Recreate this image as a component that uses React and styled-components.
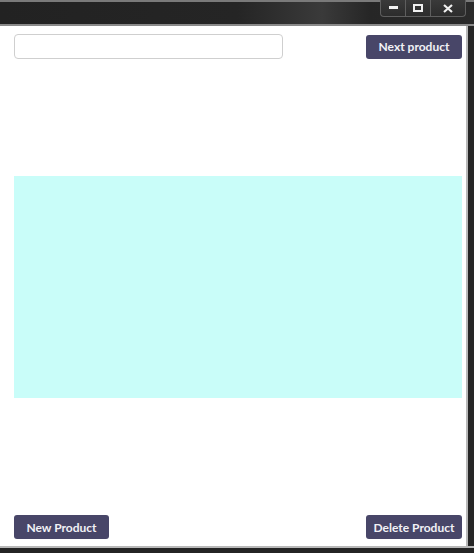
import React from 'react';
import styled, { createGlobalStyle } from 'styled-components';

const GlobalStyle = createGlobalStyle`
  html, body {
    margin: 0;
    padding: 0;
    background: #1e1e1e;
  }
  * {
    box-sizing: border-box;
  }
`;

const Window = styled.div`
  width: 474px;
  height: 553px;
  display: flex;
  flex-direction: column;
  background: #1f1f1f;
  font-family: Lato, "Open Sans", "Liberation Sans", sans-serif;
  overflow: hidden;
`;

const TitleBar = styled.div`
  height: 26px;
  flex: none;
  display: flex;
  justify-content: flex-end;
  align-items: flex-start;
  padding-right: 8px;
  border-top: 2px solid #7a7a7a;
  border-bottom: 2px solid #8a8a8a;
  background: linear-gradient(90deg, #222 0%, #252525 50%, #3a3a3a 68%, #262626 78%, #2a2a2a 100%);
`;

const Controls = styled.div`
  display: flex;
  height: 17px;
  margin-top: -2px;
  border: 1px solid #5e5e5e;
  border-top: none;
  border-radius: 0 0 4px 4px;
  background: linear-gradient(180deg, #3a3a3a, #2c2c2c);
`;

const Control = styled.div`
  width: ${(p) => p.w}px;
  display: flex;
  align-items: center;
  justify-content: center;
  border-left: ${(p) => (p.first ? 'none' : '1px solid #5e5e5e')};
  svg {
    display: block;
  }
`;

const Body = styled.div`
  flex: 1;
  display: flex;
  min-height: 0;
`;

const Content = styled.div`
  flex: 1;
  background: #fff;
  display: flex;
  flex-direction: column;
  justify-content: space-between;
  padding: 8px 4px 7px 14px;
`;

const RightFrame = styled.div`
  width: 8px;
  flex: none;
  border-left: 2px solid #b8b8b8;
  background: #262626;
`;

const BottomFrame = styled.div`
  height: 7px;
  flex: none;
  border-top: 2px solid #b8b8b8;
  background: #242424;
`;

const Row = styled.div`
  display: flex;
  justify-content: space-between;
  align-items: center;
`;

const SearchInput = styled.input`
  width: 269px;
  height: 25px;
  border: 1px solid #cfcfcf;
  border-radius: 4px;
  background: #fff;
  outline: none;
  padding: 0 8px;
`;

const Button = styled.button`
  width: ${(p) => p.w}px;
  height: 24px;
  border: none;
  border-radius: 3px;
  background: #484668;
  color: #f2f2f6;
  font-family: Lato, "Open Sans", "Liberation Sans", sans-serif;
  font-weight: 700;
  font-size: 12px;
  padding: 0;
  cursor: pointer;
`;

const Panel = styled.div`
  height: 222px;
  background: #c9fdf9;
`;

export default function App() {
  return (
    <>
      <GlobalStyle />
      <Window>
        <TitleBar>
          <Controls>
            <Control w={24} first>
              <svg width="9" height="4" viewBox="0 0 9 4">
                <rect x="0" y="0" width="9" height="3" fill="#f0f0f0" />
              </svg>
            </Control>
            <Control w={25}>
              <svg width="10" height="8" viewBox="0 0 10 8">
                <rect x="1" y="1" width="8" height="6" fill="none" stroke="#f0f0f0" strokeWidth="2" />
              </svg>
            </Control>
            <Control w={35}>
              <svg width="10" height="9" viewBox="0 0 10 9">
                <path d="M1 1 L9 8 M9 1 L1 8" stroke="#f0f0f0" strokeWidth="2.2" />
              </svg>
            </Control>
          </Controls>
        </TitleBar>
        <Body>
          <Content>
            <Row>
              <SearchInput type="text" />
              <Button w={96}>Next product</Button>
            </Row>
            <Panel />
            <Row>
              <Button w={95}>New Product</Button>
              <Button w={96}>Delete Product</Button>
            </Row>
          </Content>
          <RightFrame />
        </Body>
        <BottomFrame />
      </Window>
    </>
  );
}
